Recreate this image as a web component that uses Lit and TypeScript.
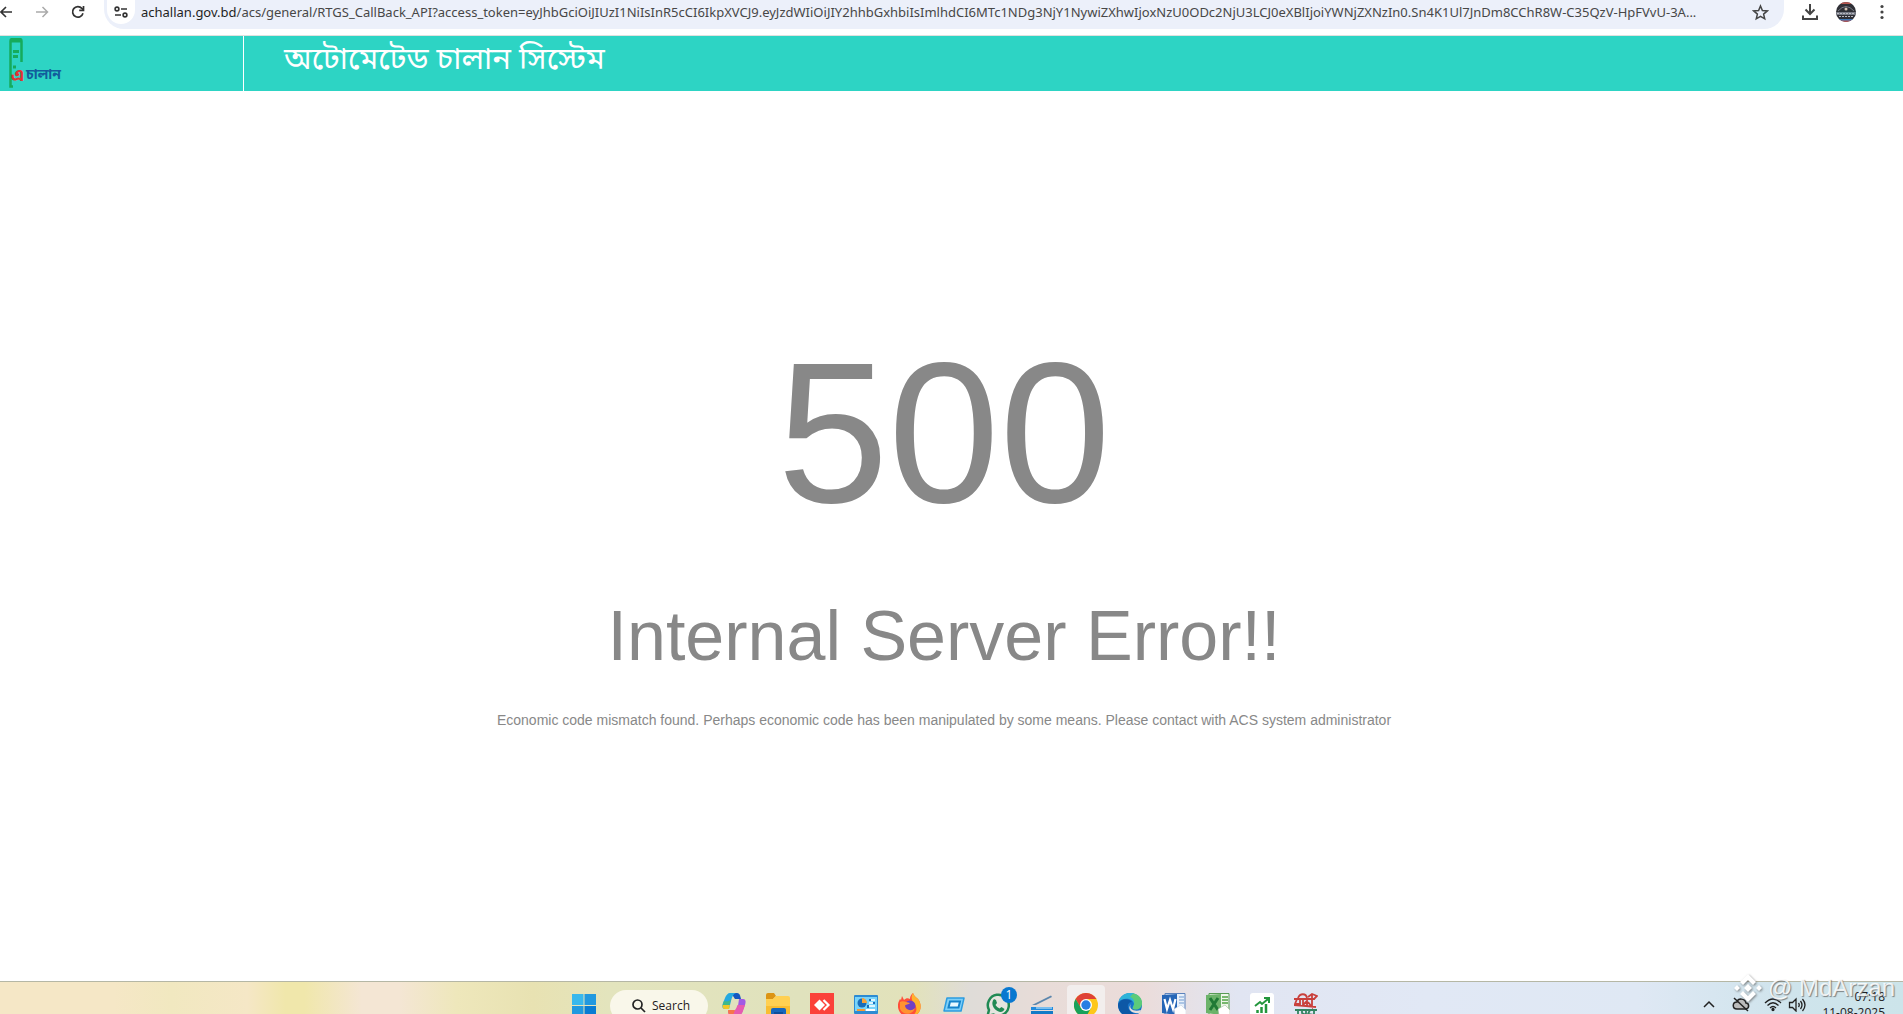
import { LitElement, html, css, svg } from "lit";
import { customElement } from "lit/decorators.js";

const URL_HOST = "achallan.gov.bd";
const URL_PATH =
  "/acs/general/RTGS_CallBack_API?access_token=eyJhbGciOiJIUzI1NiIsInR5cCI6IkpXVCJ9.eyJzdWIiOiJIY2hhbGxhbiIsImlhdCI6MTc1NDg3NjY1NywiZXhwIjoxNzU0ODc2NjU3LCJ0eXBlIjoiYWNjZXNzIn0.Sn4K1Ul7JnDm8CChR8W-C35QzV-HpFVvU-3A...";

@customElement("browser-bar")
export class BrowserBar extends LitElement {
  static styles = css`
    :host {
      display: flex;
      align-items: flex-start;
      height: 35px;
      overflow: hidden;
      background: #fff;
      border-bottom: 1px solid #dfe1df;
      font-family: "Noto Sans", "Open Sans", sans-serif;
    }
    svg { display: block; }
    button {
      border: 0;
      padding: 0;
      background: none;
      height: 24px;
      display: flex;
      align-items: center;
      justify-content: center;
      flex: none;
    }
    .nav { width: 36px; }
    .back { width: 24px; justify-content: flex-start; }
    .address {
      flex: 1;
      min-width: 0;
      height: 29px;
      margin-left: 8px;
      display: flex;
      border-radius: 0 0 20px 20px;
      background: #ecf0fa;
    }
    .site {
      width: 28px;
      border-radius: 0 0 14px 14px;
      background: #fff;
      margin-left: 3px;
    }
    .url {
      flex: 1;
      min-width: 0;
      white-space: nowrap;
      font-size: 13px;
      line-height: 24px;
      color: #474747;
      padding-left: 6px;
    }
    .host { color: #1f1f1f; }
    .star { width: 48px; }
    .tools { display: flex; padding: 0 3px 0 8px; }
    .tools button { width: 36px; }
  `;

  render() {
    return html`
      <button class="nav back" aria-label="Back">
        <svg width="14" height="14" viewBox="0 0 14 14" fill="none" stroke="#333" stroke-width="1.6"><path d="M12 7H1M6 2L1 7l5 5" /></svg>
      </button>
      <button class="nav" aria-label="Forward">
        <svg width="14" height="14" viewBox="0 0 14 14" fill="none" stroke="#aaa" stroke-width="1.5"><path d="M1 7h11M7.500 2l5 5-5 5" /></svg>
      </button>
      <button class="nav" aria-label="Reload">
        <svg width="14" height="14" viewBox="0 0 14 14" fill="none" stroke="#333" stroke-width="1.7"><path d="M12 8.300A5.300 5.300 0 1 1 10.900 3.400L12.500 5" /><path d="M12.500 1v4.300H8.200" /></svg>
      </button>
      <div class="address">
        <button class="site" aria-label="Site information">
          <svg width="14" height="12" viewBox="0 0 14 12" fill="none" stroke="#333" stroke-width="1.600"><circle cx="3" cy="3" r="1.900" /><path d="M7 3h6M1 9h6" /><circle cx="11" cy="9" r="1.900" /></svg>
        </button>
        <div class="url"><span class="host">${URL_HOST}</span>${URL_PATH}</div>
        <button class="star" aria-label="Bookmark">
          <svg width="17" height="17" viewBox="0 0 17 17" fill="none" stroke="#444" stroke-width="1.500"><path d="M8.500 2l1.900 4.500 4.900.4-3.700 3.200 1.100 4.700-4.200-2.500-4.200 2.500 1.100-4.700L1.700 6.900l4.900-.4z" /></svg>
        </button>
      </div>
      <div class="tools">
        <button aria-label="Downloads">
          <svg width="18" height="18" viewBox="0 0 18 18" fill="none" stroke="#444" stroke-width="2"><path d="M9 1v9.500M4.500 6.500L9 11l4.500-4.500M2 12.500V16h14v-3.500" /></svg>
        </button>
        <button aria-label="Profile">
          <svg width="20" height="20" viewBox="0 0 20 20"><clipPath id="c"><circle cx="10" cy="10" r="10" /></clipPath><g clip-path="url(#c)"><path fill="#2f3036" d="M0 0h20v20H0z" /><path fill="#b45650" d="M3 0h14v2H3z" /><path fill="none" stroke="#777b86" d="M2 9q8-9 16 0" /><circle cx="10" cy="7" r="1.500" fill="#d8c7b8" /><path fill="#777b86" d="M0 10h20v3H0z" /><path stroke="#b9bac0" stroke-dasharray="2 1" d="M1 11.500h18M3 14.500h14" /><path fill="#3d76b5" d="M0 17h20v2H0z" /><path fill="#b9545a" d="M0 18.500h20V20H0z" /></g></svg>
        </button>
        <button aria-label="Menu">
          <svg width="4" height="16" viewBox="0 0 4 16" fill="#444"><circle cx="2" cy="2.500" r="1.600" /><circle cx="2" cy="8" r="1.600" /><circle cx="2" cy="13.500" r="1.600" /></svg>
        </button>
      </div>
    `;
  }
}

interface TaskApp {
  name: string;
  icon: unknown;
  active?: boolean;
  badge?: string;
}

const APPS: TaskApp[] = [
  {
    name: "Copilot",
    icon: svg`<path fill="#1557c0" d="M9 0h6c2 0 3 2 3.500 4l.5 2h-6z"/><path fill="#25a9e0" d="M8 0h6c-3 1-4 4-5 8l-2 8H3c-3 0-3-3-2-6l2-5c1-3 3-5 5-5z"/><path fill="#3fb98a" d="M2 8c3 1 6 0 7-2l-2 7c-1 2-4 2-6 1-.5-2 0-4 1-6z"/><path fill="#f1c727" d="M.700 12H8l-1 4H3c-2 0-3-2-2.300-4z"/><path fill="#a05be4" d="M17 6h4c3 0 3 3 2 6l-2 5c-1 3-2 5-5 5h-4c2-1 3-5 4-9z"/><path fill="#e65bb0" d="M15.500 12H23l-2 6c-1 3-3 5-5 5H9c-2 0-3-2-3-5h5c2 0 3-2 4.500-6z"/><path fill="#f5784a" d="M6 17h7c-1 3-2 6-4 6-2-1-3-3-3-6z"/>`,
  },
  {
    name: "File Explorer",
    icon: svg`<path fill="#dc9414" d="M0 2q0-2 2-2h6l2 3-3 3H0z"/><path fill="#ffd052" d="M0 6h7l3-3h12q2 0 2 2v16H0z"/><path fill="#f9bd32" d="M0 13h24v8H0z"/><path fill="#1767bd" d="M5 17q0-2 2-2h11q2 0 2 2v7H5z"/><path fill="#0f4f9b" d="M8 19h9v5H8z"/>`,
  },
  {
    name: "AnyDesk",
    icon: svg`<path fill="#fb423a" d="M0 0h24v24H0z"/><path fill="#fff" d="M9.500 6.500l5.500 5.500-5.500 5.500L4 12z"/><path fill="none" stroke="#fff" stroke-width="2.200" d="M13.500 7L18.500 12l-5 5"/>`,
  },
  {
    name: "Control Panel",
    icon: svg`<rect y="2" width="24" height="19" rx="1" fill="#2d8bd2"/><path fill="#79d4fa" d="M1 4h22v14H1z"/><circle cx="8" cy="10" r="4.500" fill="#1a6ebb"/><path fill="#f8a43b" d="M8 10V5a5 5 0 0 1 5 5z"/><path stroke="#fff" stroke-width="1.500" d="M15 7h6M15 10h6M15 13h6"/><path stroke="#1a6ebb" stroke-width="2" d="M16 6v2M20 9v2M14 12v3"/><path stroke="#f79a33" stroke-width="2" d="M3 17h8"/><path stroke="#fff" stroke-width="2" d="M12 17h9"/>`,
  },
  {
    name: "Firefox",
    icon: svg`<path fill="#ff4f38" d="M4 3l2 4c2-2 4-2 6-1 0-3 1-4 3-6 1 3 3 4 5 6 6 8 1 18-8 18C1 24-2 14 1 8l1-2 1 1z"/><path fill="#ffb22c" d="M15 0c1 3 3 4 5 6 6 8 1 17-7 18 6-4 7-9 3-14-3-3-3-7-1-10z"/><circle cx="12" cy="13" r="5.500" fill="#7040c5"/><path fill="#ff9331" d="M2 9c3-2 6 0 10 1-1 2-5 1-5 3 1 4 6 6 10 2-2 7-12 8-15 1z"/>`,
  },
  {
    name: "Remote Session",
    icon: svg`<path d="M5 5h17l-3 13H2z" fill="#7fd0f8" stroke="#2b9ce0" stroke-width="1.500" stroke-linejoin="round"/><path d="M8 8.500h10l-1.500 6H6.500z" fill="#e7f8ff" stroke="#1583cb" stroke-width="2"/>`,
  },
  {
    name: "WhatsApp",
    badge: "1",
    icon: svg`<path d="M1.500 23l1.500-6A10.500 10.500 0 1 1 7.500 21.500z" fill="#e5e5df" stroke="#208a54" stroke-width="2.500"/><path fill="#208a54" d="M8 6l2 1 1 3-1.500 2q2 3 4 3.500l2-1.500 3 2c-1 3-4 4-7 2C7 15.500 4.500 10 8 6z"/>`,
  },
  {
    name: "Scanner",
    icon: svg`<path fill="#5b86ad" d="M2 12L21 2.500l1 1.500L6 12z"/><path fill="#218bdd" d="M1 14h22v3H1z"/><path fill="#137ac7" d="M1 18h22v4H1z"/><path stroke="#d6f1ff" d="M6 15h16"/>`,
  },
  {
    name: "Chrome",
    active: true,
    icon: svg`<circle cx="12" cy="12" r="12" fill="#fdc719"/><path fill="#df4237" d="M1.600 6A12 12 0 0 1 22.400 6H12v6L7 15z"/><path fill="#19a15b" d="M1.600 6A12 12 0 0 0 12 24l5-9-10 0z"/><circle cx="12" cy="12" r="6" fill="#fff"/><circle cx="12" cy="12" r="4.700" fill="#287ee3"/>`,
  },
  {
    name: "Edge",
    icon: svg`<circle cx="12" cy="12" r="12" fill="#1976c8"/><path fill="#2fb4d8" d="M.500 9C4-2 17-3 22 5c4 7-1 12-6 11-3-1 0-3 0-5-1-6-11-7-15.500-2z"/><path fill="#5ccb7a" d="M15 .500c8 1 11 9 8 13.500-2 3-6 3-8 2-1-1 1-3 1-5 1-3-1-6-4-7z"/><path fill="#0d58a6" d="M0 12c2-7 11-7 14-3-6 0-6 9 3 12-8 6-17-1-17-9z"/><path fill="#e8dfdc" d="M13 11c-3 5 3 8 10 6l-1.500 3C15 21 8 17 13 11z"/>`,
  },
  {
    name: "Word",
    icon: svg`<path fill="#e8f0fa" stroke="#5c83bd" d="M3 .5h20v23H3z"/><path fill="#2666b7" d="M0 2L15 1v21L0 20z"/><path fill="none" stroke="#fff" stroke-width="2.200" d="M2.500 6l2.500 10 3-9 3 9 2.500-10"/><path stroke="#709bd1" d="M17 4h5M17 7h5M17 10h5"/><path fill="#fff" stroke="#bcc9dd" stroke-width=".5" d="M12 16l7-4 5 5v6H13z"/>`,
  },
  {
    name: "Excel",
    icon: svg`<path fill="#eef6ea" stroke="#579b54" d="M3 .5h20v23H3z"/><path fill="#6cb36a" d="M0 2L15 1v21L0 20z"/><path fill="none" stroke="#1f7a35" stroke-width="3" d="M4 5l8 12M12 5L4 17"/><path stroke="#77b76e" stroke-width="2" d="M16 4h6M16 7h6M16 10h6"/><path fill="#fff" stroke="#8fae8b" stroke-width=".5" d="M12 16l7-4 5 5v6H13z"/>`,
  },
  {
    name: "Markets",
    icon: svg`<rect width="24" height="24" rx="3" fill="#fff"/><path stroke="#23963c" stroke-width="2.500" d="M7.500 20v-3M11.500 20v-6M16 20v-9"/><path fill="none" stroke="#23963c" stroke-width="2" d="M5 13l5-4 2 2 6-5M14 5h5v5"/>`,
  },
  {
    name: "Scheme Portal",
    icon: svg`<path fill="none" stroke="#c9403c" stroke-width="1.800" d="M0 6h21M3 6l-2 5h5V6M9 6v6l4-4v5M18 6v8l-4-5M0 12l12 1 10 1M4 5c2-5 8-5 9 0M14 4l4-3 5 2-3 3M18 1v5"/><path fill="none" stroke="#338461" stroke-width="1.800" d="M1 17h22M4 17v5M8 17v3l4 2v-5M16 17l-2 4 6 1v-5"/>`,
  },
];

@customElement("task-bar")
export class TaskBar extends LitElement {
  static styles = css`
    :host {
      display: grid;
      grid-template-columns: minmax(0, 1fr) auto minmax(0, 1fr);
      height: 32px;
      padding-right: 13px;
      overflow: hidden;
      border-top: 1px solid #b5b7a5;
      background: linear-gradient(90deg, #f5e7c6 0%, #f5e7c6 6%, #f1e8c0 9%, #f5e7c6 13%, #f0e7ab 15%, #f0e7ab 16%, #f4e6d4 19%, #f4e6d4 21%, #eee7bb 24%, #e8e2b2 28%, #e3e4bd 32%, #e0e2bd 42%, #e2e2bb 48%, #dfdcd8 51%, #e8dcd8 55%, #ebdcda 60%, #e1e5f2 65%, #e1e8f5 75%, #dfe8f4 86%, #cfe4ec 94%, #cce4ea 100%);
      font-family: "Open Sans", "Noto Sans", sans-serif;
      color: #1f2022;
    }
    svg { display: block; }
    button {
      border: 0;
      padding: 0;
      background: none;
      font: inherit;
      color: inherit;
    }
    .apps {
      grid-column: 2;
      display: flex;
      align-items: flex-start;
      gap: 6px;
    }
    .app {
      position: relative;
      display: flex;
      align-items: flex-start;
      justify-content: center;
      width: 38px;
      height: 40px;
      padding-top: 8px;
      margin-top: 3px;
      border-radius: 4px;
    }
    .active { background: #f2eeed; }
    .search {
      display: flex;
      align-items: center;
      gap: 6px;
      width: 98px;
      height: 32px;
      margin: 8px 1px 0 1px;
      padding: 0 18px 0 22px;
      border-radius: 16px;
      background: #f9f7ea;
      font-size: 12px;
      line-height: 16px;
    }
    .badge {
      position: absolute;
      right: 0;
      top: 2px;
      width: 16px;
      height: 16px;
      border-radius: 8px;
      background: #0878d0;
      color: #fff;
      font-size: 12px;
      line-height: 16px;
      text-align: center;
    }
    .tray {
      display: flex;
      justify-content: flex-end;
      align-items: flex-start;
      padding-right: 5px;
    }
    .status {
      display: flex;
      gap: 14px;
      padding: 14px 16px 0 0;
    }
    .sound { display: flex; gap: 6px; }
    .clock {
      padding-top: 7px;
      font-size: 12px;
      line-height: 16px;
      text-align: right;
    }
  `;

  render() {
    return html`
      <div class="apps">
        <button class="app" aria-label="Start">
          <svg width="24" height="24" viewBox="0 0 24 24"><path fill="#38b8ed" d="M0 1h11.500v11H0z" /><path fill="#2199df" d="M12.500 1H24v11H12.500zM0 13h11.500v11H0z" /><path fill="#087cd3" d="M12.500 13H24v11H12.500z" /></svg>
        </button>
        <button class="search">
          <svg width="14" height="14" viewBox="0 0 14 14" fill="none" stroke="#222" stroke-width="1.700"><circle cx="5.500" cy="5.500" r="4.500" /><path d="M9 9l4 4" /></svg>
          <span>Search</span>
        </button>
        ${APPS.map(
          (app) => html`<button class="app ${app.active ? "active" : ""}" aria-label=${app.name}>
            <svg width="24" height="24" viewBox="0 0 24 24">${app.icon}</svg>
            ${app.badge ? html`<span class="badge">${app.badge}</span>` : ""}
          </button>`
        )}
      </div>
      <div class="tray">
        <div class="status">
          <svg width="18" height="16" viewBox="0 0 18 16" fill="none" stroke="#222" stroke-width="1.500"><path d="M4 11l5-5 5 5" /></svg>
          <svg width="18" height="16" viewBox="0 0 18 16" fill="#bbb" stroke="#222" stroke-width="1.500"><path d="M5 13h9c4-1 3-6 0-6-1-5-8-5-9-1-5 0-5 7 0 7z" /><path d="M2 2l14 13" /></svg>
          <div class="sound">
            <svg width="18" height="16" viewBox="0 0 18 16" fill="none" stroke="#222" stroke-width="1.300"><path d="M1 7q8-8 16 0M3.500 9.500q5.500-5.500 11 0M6 12q3-3 6 0" /><circle cx="9" cy="13.500" r="1" fill="#222" /></svg>
            <svg width="18" height="16" viewBox="0 0 18 16" fill="none" stroke="#222" stroke-width="1.300"><path d="M1.500 6.500h3L8 3v12l-3.500-3.500h-3zM10.500 7q1.500 2 0 4M12.500 5q3 4 0 8M14.500 3q5 6 0 12" /></svg>
          </div>
        </div>
        <div class="clock">07:18<br />11-08-2025</div>
      </div>
    `;
  }
}

@customElement("app-root")
export class AppRoot extends LitElement {
  static styles = css`
    :host {
      display: flex;
      flex-direction: column;
      position: relative;
      height: 100vh;
      overflow: hidden;
      background: #fff;
      font-family: "Liberation Sans", Arial, sans-serif;
    }
    browser-bar, task-bar { flex: none; }
    .header {
      display: flex;
      flex: none;
      height: 55px;
      background: #2dd4c4;
      color: #fff;
    }
    .brand {
      width: 244px;
      border-right: 1px solid #fff;
      padding: 2px 8px;
      box-sizing: border-box;
      flex: none;
    }
    .logo { position: relative; display: block; width: 52px; height: 50px; text-decoration: none; }
    .logo svg { display: block; }
    .mark {
      position: absolute;
      font-family: "Noto Sans Bengali", "Noto Sans", sans-serif;
      font-weight: 700;
      line-height: 24px;
    }
    .red { left: 3px; top: 26px; color: #e13232; font-size: 18px; }
    .blue { left: 18px; top: 26px; color: #125d9c; font-size: 14px; }
    .title {
      margin: 0;
      padding-left: 40px;
      font-family: "Noto Sans Bengali", "Noto Sans", sans-serif;
      font-weight: 400;
      font-size: 31px;
      line-height: 52px;
    }
    .error {
      flex: 1;
      padding: 227px 15px 0 0;
      text-align: center;
      color: #888;
    }
    .code { margin: 0; font-size: 200px; line-height: 230px; font-weight: 400; }
    .name { margin: 0; padding-top: 48px; font-size: 70px; line-height: 80px; font-weight: 400; }
    .message { margin: 0; padding-top: 34px; font-size: 14px; line-height: 20px; }
    .watermark {
      position: absolute;
      right: 8px;
      bottom: 10px;
      display: flex;
      align-items: center;
      gap: 6px;
      font-size: 24px;
      line-height: 32px;
      color: rgba(255, 255, 255, 0.85);
      text-shadow: 1px 1px 1px rgba(90, 90, 90, 0.7);
    }
    .watermark svg { filter: drop-shadow(1px 1px 1px rgba(90, 90, 90, 0.7)); }
  `;

  render() {
    return html`
      <browser-bar></browser-bar>
      <header class="header">
        <div class="brand">
          <a class="logo" href="#">
            <svg width="16" height="50" viewBox="0 0 16 50"><path d="M5 48.500H2.500V3q0-2 2-2h7q2 0 2 2v21" fill="none" stroke="#16ab5c" stroke-width="2.500" /><path stroke="#16ab5c" stroke-width="3" d="M3 3h10M5 13.500h6M5 18.500h5M5 29h3" /></svg>
            <span class="mark red">এ</span><span class="mark blue">চালান</span>
          </a>
        </div>
        <h1 class="title">অটোমেটেড চালান সিস্টেম</h1>
      </header>
      <main class="error">
        <h2 class="code">500</h2>
        <h3 class="name">Internal Server Error!!</h3>
        <p class="message">Economic code mismatch found. Perhaps economic code has been manipulated by some means. Please contact with ACS system administrator</p>
      </main>
      <task-bar></task-bar>
      <div class="watermark">
        <svg width="28" height="28" viewBox="0 0 28 28" fill="#fff"><path d="M14 0l8 8-3 3-5-5-5 5-3-3zM14 28l8-8-3-3-5 5-5-5-3 3zM3 11l3 3-3 3-3-3zM25 11l3 3-3 3-3-3zM14 10l4 4-4 4-4-4z" /></svg>
        <span>@ MdArzan</span>
      </div>
    `;
  }
}
